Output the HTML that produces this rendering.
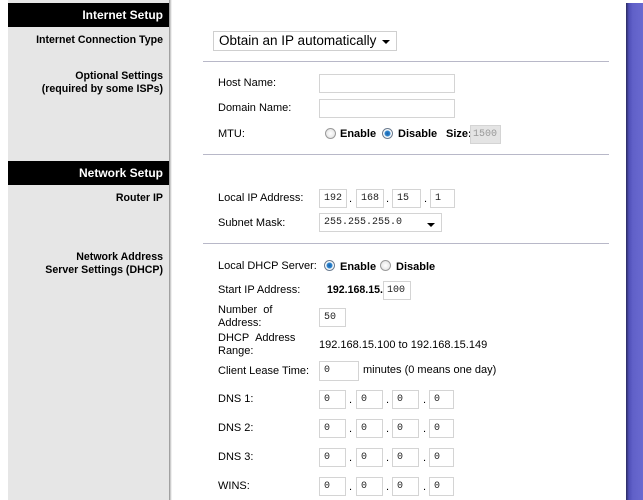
<!DOCTYPE html>
<html><head><meta charset="utf-8"><style>
*{margin:0;padding:0;box-sizing:border-box}
body{width:643px;height:500px;background:#fff;position:relative;overflow:hidden;font-family:"Liberation Sans",Arial,sans-serif;font-size:11px;color:#000}
.a{position:absolute;white-space:nowrap}
.gray{left:8px;top:0;width:161px;height:500px;background:#e6e6e6}
.shadow{left:169px;top:0;width:3px;height:500px;background:linear-gradient(90deg,#8a8a8a,#cfcfcf,#fff)}
.hdr{left:8px;width:161px;height:24px;background:#000;color:#fff;font-weight:bold;font-size:12px;text-align:right;padding-right:6px;line-height:24px}
.lb{right:480px;text-align:right;font-weight:bold;line-height:13px;font-size:10.6px}
.hr{left:203px;width:406px;height:1px;background:#b8b8c8}
.in{border:1px solid #d4d4d4;background:#fff;font-family:"Liberation Mono",monospace;font-size:10px;padding-left:4px;line-height:17px;color:#222}
.dot{font-size:11px}
.rad{width:11px;height:11px;border-radius:50%;border:1px solid #9a9a9a;background:radial-gradient(#fff,#ddd)}
.on{background:radial-gradient(circle,#1a5fa8 0,#2d86d0 2.5px,#fff 3.5px,#eee 100%);border-color:#6b7b8f}
.purple{left:626px;top:3px;width:17px;height:497px;background:linear-gradient(90deg,#2a2a60,#5050b8 3px,#6060c8 40%,#6a6ad0)}
</style></head><body>
<div class="a gray"></div>
<div class="a shadow"></div>
<div class="a purple"></div>
<div class="a hdr" style="top:3px">Internet Setup</div>
<div class="a hdr" style="top:161px">Network Setup</div>
<div class="a lb" style="top:34px">Internet Connection Type</div>
<div class="a lb" style="top:70px">Optional Settings<br>(required by some ISPs)</div>
<div class="a lb" style="top:192px">Router IP</div>
<div class="a lb" style="top:251px">Network Address<br>Server Settings (DHCP)</div>

<div class="a" style="left:213px;top:31px;width:184px;height:20px;border:1px solid #cfcfcf;background:#fff;font-size:13.5px;line-height:18px;padding-left:5px">Obtain an IP automatically<span style="position:absolute;right:6px;top:8px;border-left:4px solid transparent;border-right:4px solid transparent;border-top:4px solid #000"></span></div>
<div class="a hr" style="top:61px"></div>
<div class="a" style="left:218px;top:77px">Host Name:</div>
<div class="a in" style="left:319px;top:74px;width:136px;height:19px"></div>
<div class="a" style="left:218px;top:102px">Domain Name:</div>
<div class="a in" style="left:319px;top:99px;width:136px;height:19px"></div>
<div class="a" style="left:218px;top:128px">MTU:</div>
<div class="a rad" style="left:325px;top:128px"></div>
<div class="a" style="left:340px;top:128px;font-weight:bold">Enable</div>
<div class="a rad on" style="left:382px;top:128px"></div>
<div class="a" style="left:398px;top:128px;font-weight:bold">Disable</div>
<div class="a" style="left:446px;top:128px;font-weight:bold">Size:</div>
<div class="a in" style="left:470px;top:125px;width:31px;height:19px;background:#e4e4e4;color:#999;padding-left:2px">1500</div>
<div class="a hr" style="top:154px"></div>

<div class="a" style="left:218px;top:192px">Local IP Address:</div>
<div class="a in" style="left:319px;top:189px;width:28px;height:19px">192</div>
<div class="a dot" style="left:349px;top:193px">.</div>
<div class="a in" style="left:356px;top:189px;width:28px;height:19px">168</div>
<div class="a dot" style="left:386px;top:193px">.</div>
<div class="a in" style="left:392px;top:189px;width:29px;height:19px">15</div>
<div class="a dot" style="left:424px;top:193px">.</div>
<div class="a in" style="left:430px;top:189px;width:25px;height:19px">1</div>
<div class="a" style="left:218px;top:217px">Subnet Mask:</div>
<div class="a in" style="left:319px;top:213px;width:123px;height:19px">255.255.255.0<span style="position:absolute;right:6px;top:9px;border-left:4px solid transparent;border-right:4px solid transparent;border-top:4px solid #000"></span></div>
<div class="a hr" style="top:243px"></div>

<div class="a" style="left:218px;top:260px">Local DHCP Server:</div>
<div class="a rad on" style="left:324px;top:260px"></div>
<div class="a" style="left:340px;top:261px;font-weight:bold">Enable</div>
<div class="a rad" style="left:380px;top:260px"></div>
<div class="a" style="left:396px;top:261px;font-weight:bold">Disable</div>
<div class="a" style="left:218px;top:284px">Start IP Address:</div>
<div class="a" style="left:327px;top:284px;font-weight:bold;font-size:10.6px">192.168.15.</div>
<div class="a in" style="left:383px;top:281px;width:28px;height:19px;padding-left:3px">100</div>
<div class="a" style="left:218px;top:304px;line-height:13px">Number &nbsp;of<br>Address:</div>
<div class="a in" style="left:319px;top:308px;width:27px;height:19px">50</div>
<div class="a" style="left:218px;top:332px;line-height:13px">DHCP &nbsp;Address<br>Range:</div>
<div class="a" style="left:319px;top:339px">192.168.15.100 to 192.168.15.149</div>
<div class="a" style="left:218px;top:365px">Client Lease Time:</div>
<div class="a in" style="left:319px;top:361px;width:40px;height:20px">0</div>
<div class="a" style="left:363px;top:364px">minutes (0 means one day)</div>

<div class="a" style="left:218px;top:393px">DNS 1:</div>
<div class="a" style="left:218px;top:422px">DNS 2:</div>
<div class="a" style="left:218px;top:451px">DNS 3:</div>
<div class="a" style="left:218px;top:480px">WINS:</div>

<div class="a in" style="left:319px;top:390px;width:27px;height:19px">0</div><div class="a dot" style="left:349px;top:394px">.</div><div class="a in" style="left:356px;top:390px;width:27px;height:19px">0</div><div class="a dot" style="left:386px;top:394px">.</div><div class="a in" style="left:392px;top:390px;width:27px;height:19px">0</div><div class="a dot" style="left:423px;top:394px">.</div><div class="a in" style="left:429px;top:390px;width:25px;height:19px">0</div>
<div class="a in" style="left:319px;top:419px;width:27px;height:19px">0</div><div class="a dot" style="left:349px;top:423px">.</div><div class="a in" style="left:356px;top:419px;width:27px;height:19px">0</div><div class="a dot" style="left:386px;top:423px">.</div><div class="a in" style="left:392px;top:419px;width:27px;height:19px">0</div><div class="a dot" style="left:423px;top:423px">.</div><div class="a in" style="left:429px;top:419px;width:25px;height:19px">0</div>
<div class="a in" style="left:319px;top:448px;width:27px;height:19px">0</div><div class="a dot" style="left:349px;top:452px">.</div><div class="a in" style="left:356px;top:448px;width:27px;height:19px">0</div><div class="a dot" style="left:386px;top:452px">.</div><div class="a in" style="left:392px;top:448px;width:27px;height:19px">0</div><div class="a dot" style="left:423px;top:452px">.</div><div class="a in" style="left:429px;top:448px;width:25px;height:19px">0</div>
<div class="a in" style="left:319px;top:477px;width:27px;height:19px">0</div><div class="a dot" style="left:349px;top:481px">.</div><div class="a in" style="left:356px;top:477px;width:27px;height:19px">0</div><div class="a dot" style="left:386px;top:481px">.</div><div class="a in" style="left:392px;top:477px;width:27px;height:19px">0</div><div class="a dot" style="left:423px;top:481px">.</div><div class="a in" style="left:429px;top:477px;width:25px;height:19px">0</div>
</body></html>
